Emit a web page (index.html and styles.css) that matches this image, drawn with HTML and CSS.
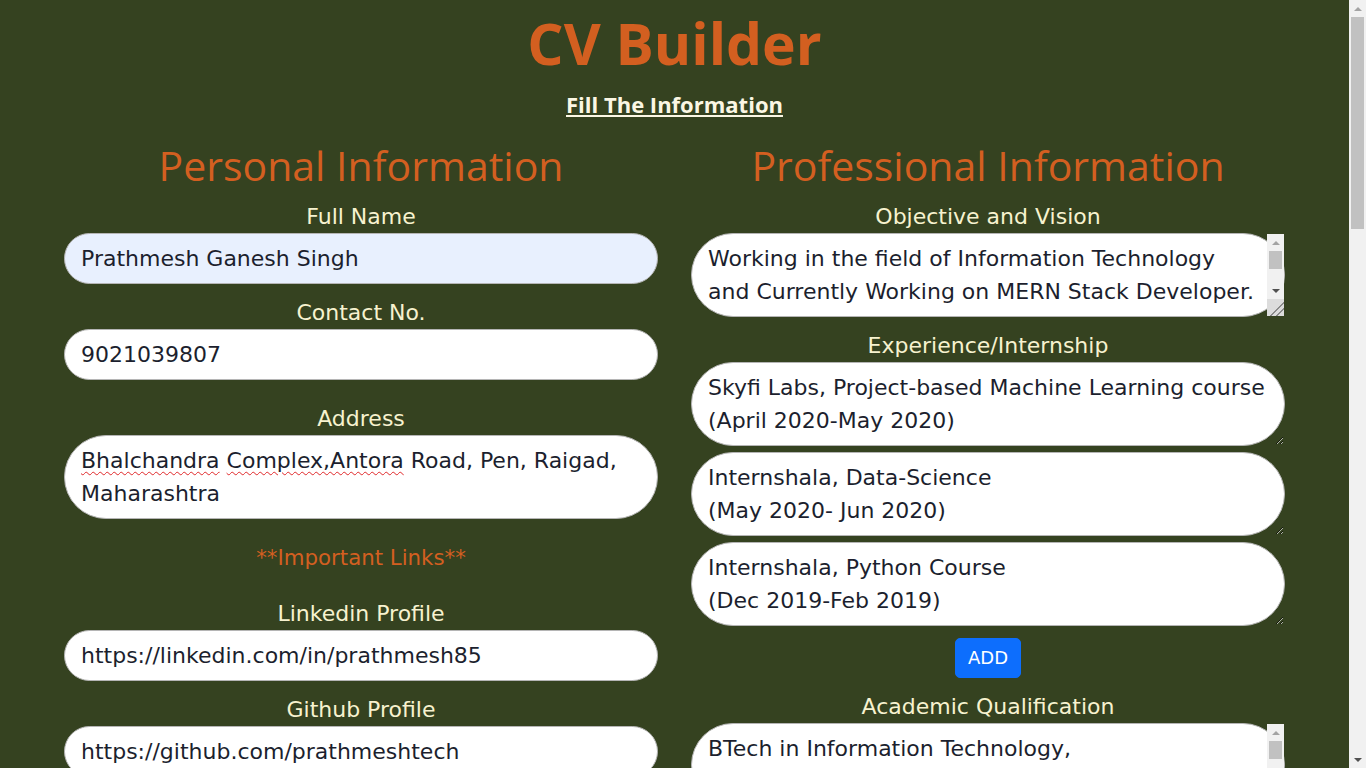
FILE: index.html
```html
<!DOCTYPE html>
<html lang="en">
<head>
<meta charset="utf-8">
<title>CV Builder</title>
<link rel="stylesheet" href="styles.css">
</head>
<body>
<div class="page">
  <header class="top">
    <h1 class="title">CV Builder</h1>
    <p class="subtitle">Fill The Information</p>
  </header>
  <main class="cols">
    <section class="col">
      <h2 class="sec-title">Personal Information</h2>
      <div class="field gap-s">
        <label class="lbl">Full Name</label>
        <input class="ctrl auto" type="text" value="Prathmesh Ganesh Singh">
      </div>
      <div class="field gap-l">
        <label class="lbl">Contact No.</label>
        <input class="ctrl" type="text" value="9021039807">
      </div>
      <div class="field gap-l">
        <label class="lbl">Address</label>
        <div class="ctrl area"><span class="spell">Bhalchandra</span> <span class="spell">Complex,Antora</span> Road, Pen, Raigad, Maharashtra</div>
      </div>
      <p class="links-note">**Important Links**</p>
      <div class="field gap-s">
        <label class="lbl">Linkedin Profile</label>
        <input class="ctrl" type="text" value="https://linkedin.com/in/prathmesh85">
      </div>
      <div class="field gap-s">
        <label class="lbl">Github Profile</label>
        <input class="ctrl" type="text" value="https://github.com/prathmeshtech">
      </div>
      <div class="field gap-s">
        <label class="lbl">Portfolio Website</label>
        <input class="ctrl" type="text" value="https://prathmesh.dev">
      </div>
      <div class="field gap-s">
        <label class="lbl">Email</label>
        <input class="ctrl" type="text" value="prathmesh@example.com">
      </div>
    </section>
    <section class="col">
      <h2 class="sec-title">Professional Information</h2>
      <div class="field gap-s">
        <label class="lbl">Objective and Vision</label>
        <div class="ta-wrap">
          <textarea class="ctrl ta scrolled">Working in the field of Information Technology
and Currently Working on MERN Stack Developer.
Looking for an opportunity to grow my skills
and contribute to the organization.</textarea>
          <div class="ta-sb">
            <span class="arr-up light"></span>
            <span class="ta-track"><span class="ta-thumb"></span></span>
            <span class="arr-down"></span>
          </div>
          <span class="ta-resizer"></span>
        </div>
      </div>
      <div class="field">
        <label class="lbl">Experience/Internship</label>
        <textarea class="ctrl ta stack">Skyfi Labs, Project-based Machine Learning course
(April 2020-May 2020)</textarea>
        <textarea class="ctrl ta stack">Internshala, Data-Science
(May 2020- Jun 2020)</textarea>
        <textarea class="ctrl ta stack">Internshala, Python Course
(Dec 2019-Feb 2019)</textarea>
      </div>
      <div class="btn-row"><button class="btn" type="button">ADD</button></div>
      <div class="field">
        <label class="lbl">Academic Qualification</label>
        <div class="ta-wrap stack">
          <textarea class="ctrl ta scrolled">BTech in Information Technology,
Pillai HOC College of Engineering
and Technology, Rasayani
(2018-2022)</textarea>
          <div class="ta-sb">
            <span class="arr-up light"></span>
            <span class="ta-track"><span class="ta-thumb"></span></span>
            <span class="arr-down"></span>
          </div>
          <span class="ta-resizer"></span>
        </div>
        <textarea class="ctrl ta stack">HSC, Science
(2016-2018)</textarea>
      </div>
      <div class="btn-row"><button class="btn" type="button">ADD</button></div>
      <div class="field gap-s">
        <label class="lbl">Skills</label>
        <textarea class="ctrl ta">HTML, CSS, JavaScript, React, Node.js
MongoDB, Express, Python</textarea>
      </div>
      <div class="field gap-s">
        <label class="lbl">Projects</label>
        <textarea class="ctrl ta">CV Builder using HTML, CSS, JavaScript
Weather App using React</textarea>
      </div>
      <div class="field gap-s">
        <label class="lbl">Achievements</label>
        <textarea class="ctrl ta">Winner of college hackathon 2021</textarea>
      </div>
    </section>
  </main>
  <div class="gen-row"><button class="btn btn-gen" type="button">Generate CV</button></div>
</div>
<div class="page-sb" aria-hidden="true">
  <span class="arr-up light"></span>
  <span class="sb-track"><span class="sb-thumb"></span></span>
  <span class="arr-down"></span>
</div>
</body>
</html>
```
FILE: styles.css
```css
body {
  margin: 0;
  background: #354220;
  font-family: "DejaVu Sans", "Open Sans", sans-serif;
  color: #f7f2cf;
}

.page {
  margin-right: 17px;
}

/* fake window scrollbar (overlay on the right edge) */
.page-sb {
  position: fixed;
  top: 0;
  right: 0;
  width: 17px;
  height: 100vh;
  background: #f1f1f1;
  display: flex;
  flex-direction: column;
}

.arr-up,
.arr-down {
  flex: 0 0 17px;
  height: 17px;
  display: flex;
  align-items: center;
  justify-content: center;
}

.arr-up::before {
  content: "";
  border-left: 4px solid transparent;
  border-right: 4px solid transparent;
  border-bottom: 4px solid #a3a3a3;
}

.arr-down::before {
  content: "";
  border-left: 4px solid transparent;
  border-right: 4px solid transparent;
  border-top: 4px solid #505050;
}

.sb-track {
  flex: 1;
  display: flex;
  flex-direction: column;
}

.sb-thumb {
  height: 212px;
  margin: 0 2px;
  background: #c1c1c1;
}

.top {
  text-align: center;
  padding-top: 10px;
  font-family: "Open Sans", "DejaVu Sans", sans-serif;
}

.title {
  margin: 0;
  font-size: 57px;
  line-height: 67px;
  font-weight: 700;
  color: #d35f20;
}

.subtitle {
  margin: 11px 0 0;
  font-size: 22px;
  line-height: 33px;
  font-weight: 700;
  text-decoration: underline;
  color: #fbf7e4;
}

.cols {
  display: grid;
  grid-template-columns: 1fr 1fr;
  column-gap: 33px;
  padding: 20px 64px 40px;
  align-items: start;
}

.sec-title {
  margin: 0 0 11px;
  text-align: center;
  font-family: "Open Sans", "DejaVu Sans", sans-serif;
  font-size: 41px;
  line-height: 48px;
  font-weight: 400;
  color: #d35f20;
}

.field.gap-s { margin-bottom: 12px; }
.field.gap-l { margin-bottom: 22px; }

.lbl {
  display: block;
  text-align: center;
  font-size: 22px;
  line-height: 33px;
}

.ctrl {
  display: block;
  box-sizing: border-box;
  width: 100%;
  margin: 0;
  font-family: inherit;
  font-size: 22px;
  line-height: 33px;
  padding: 8px 16px;
  border: 1px solid #b5b5b5;
  border-radius: 50px;
  background: #fff;
  color: #1c1f2e;
}

.ctrl.auto { background: #e8f0fe; }

.ta {
  height: 84px;
  resize: vertical;
  padding-right: 12px;
}

.ta.stack,
.ta-wrap.stack { margin-bottom: 6px; }

.ta.scrolled {
  padding-right: 30px;
  resize: none;
  overflow: hidden;
}

/* textarea with visible scrollbar */
.ta-wrap {
  position: relative;
}

.ta-sb {
  position: absolute;
  top: 1px;
  right: 1px;
  width: 17px;
  height: 65px;
  background: #f1f1f1;
  display: flex;
  flex-direction: column;
}

.ta-track {
  flex: 1;
  display: flex;
  flex-direction: column;
}

.ta-thumb {
  height: 18px;
  margin: 0 2px;
  background: #c1c1c1;
}

.ta-resizer {
  position: absolute;
  right: 1px;
  top: 66px;
  width: 17px;
  height: 17px;
  background-color: #dcdcdc;
  background-image: linear-gradient(135deg, transparent 58%, #8a8a8a 58%, #8a8a8a 64%, transparent 64%, transparent 76%, #8a8a8a 76%, #8a8a8a 82%, transparent 82%);
}

/* address box (div so the spell-check marks can show) */
.area {
  position: relative;
  height: 84px;
  overflow: hidden;
}

.area::after {
  content: "";
  position: absolute;
  right: 2px;
  bottom: 2px;
  width: 8px;
  height: 8px;
  background: linear-gradient(135deg, transparent 40%, #9a9a9a 40%, #9a9a9a 50%, transparent 50%, transparent 72%, #9a9a9a 72%, #9a9a9a 82%, transparent 82%);
}

.spell {
  text-decoration: underline wavy #e0282a;
  text-decoration-thickness: 1px;
  text-underline-offset: 3px;
}

.links-note {
  margin: 0 0 23px;
  text-align: center;
  font-size: 21.3px;
  line-height: 33px;
  color: #d35f20;
}

.btn-row {
  display: flex;
  justify-content: center;
  margin: 12px 0 12px;
}

.btn {
  font-family: inherit;
  font-size: 18px;
  line-height: 26px;
  padding: 6px 12px;
  border: 1px solid #0d6efd;
  border-radius: 5px;
  background: #0d6efd;
  color: #fff;
}

.gen-row {
  display: flex;
  justify-content: center;
  padding: 40px 0 900px;
}

.btn-gen {
  font-size: 24px;
  padding: 10px 28px;
}
```
